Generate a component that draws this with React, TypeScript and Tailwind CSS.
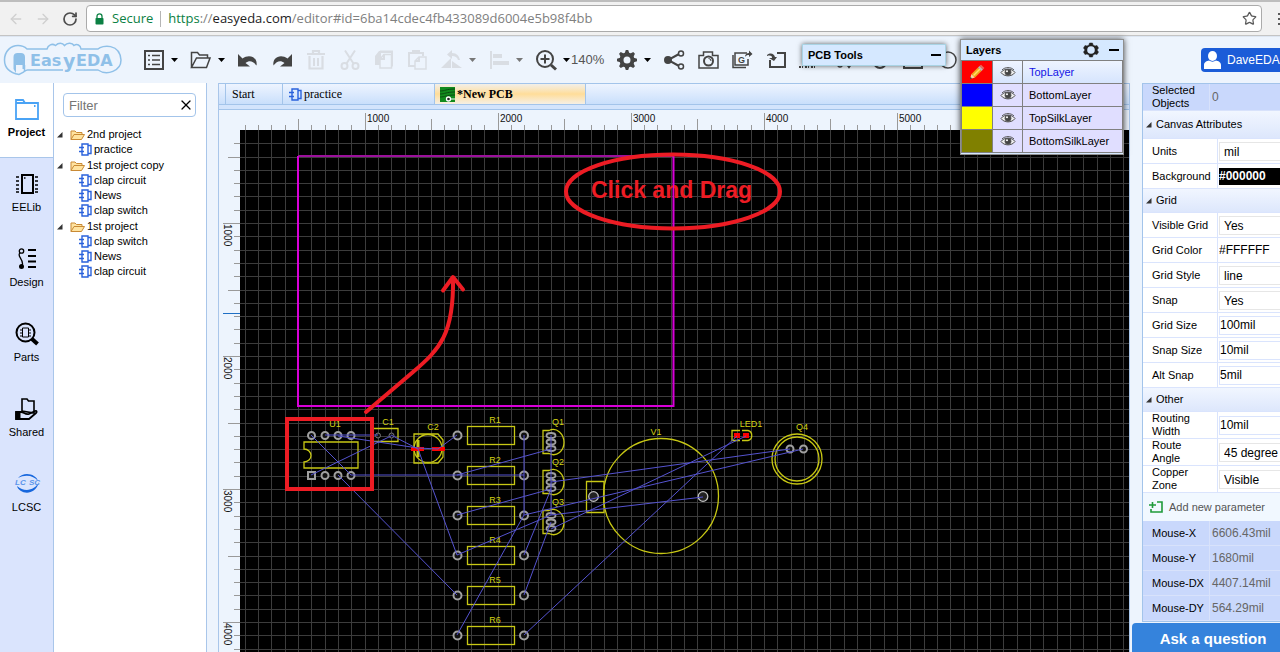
import { useState } from "react";
import type { ReactNode } from "react";
import { Star, RotateCw, ArrowLeft, ArrowRight, X } from "lucide-react";

const mils = [1000, 2000, 3000, 4000, 5000];
const resistors = ["R1", "R2", "R3", "R4", "R5", "R6"];
const transistors = ["Q1", "Q2", "Q3"];

const layers = [
  { name: "TopLayer", swatch: "bg-[#ff0000]" },
  { name: "BottomLayer", swatch: "bg-[#0000ff]" },
  { name: "TopSilkLayer", swatch: "bg-[#ffff00]" },
  { name: "BottomSilkLayer", swatch: "bg-[#808000]" },
];

const projects = [
  { name: "2nd project", files: ["practice"] },
  { name: "1st project copy", files: ["clap circuit", "News", "clap switch"] },
  { name: "1st project", files: ["clap switch", "News", "clap circuit"] },
];

// Unrouted nets, pad to pad
const ratsnest = [
  [311, 435, 351, 475],
  [325, 435, 378, 435],
  [338, 436, 418, 448],
  [418, 448, 438, 449],
  [311, 475, 391, 436],
  [391, 435, 418, 449],
  [351, 475, 524, 475],
  [338, 475, 457, 595],
  [418, 449, 457, 555],
  [438, 449, 457, 435],
  [524, 435, 524, 515],
  [457, 475, 551, 449],
  [457, 515, 551, 489],
  [457, 555, 551, 515],
  [524, 515, 457, 635],
  [524, 555, 551, 489],
  [524, 595, 551, 522],
  [551, 435, 551, 515],
  [551, 482, 790, 449],
  [524, 515, 803, 449],
  [551, 515, 703, 497],
  [551, 529, 746, 436],
  [524, 635, 737, 436],
];

function Caret({ className = "" }: { className?: string }) {
  return (
    <svg width="9" height="5" viewBox="0 0 9 5" className={className}>
      <path d="M1 0h7L4.500 4z" fill="currentColor" />
    </svg>
  );
}

function Twisty() {
  return (
    <svg width="6" height="6" viewBox="0 0 6 6" className="shrink-0">
      <path d="M5.500 0v5.500H0z" fill="#333" />
    </svg>
  );
}

function Tool({
  label,
  menu = false,
  disabled = false,
  children,
}: {
  label: string;
  menu?: boolean;
  disabled?: boolean;
  children: ReactNode;
}) {
  return (
    <button
      aria-label={label}
      disabled={disabled}
      className={`flex h-6 shrink-0 items-center gap-1 ${disabled ? "text-[#d9dde3]" : "text-[#444]"}`}
    >
      <svg width="24" height="24" viewBox="0 0 24 24" fill="none" stroke="currentColor" strokeWidth="2">
        {children}
      </svg>
      {menu && <Caret className={disabled ? "text-[#777]" : "text-black"} />}
    </button>
  );
}

function Gear({ size = 20, teeth = 8 }: { size?: number; teeth?: number }) {
  return (
    <svg width={size} height={size} viewBox="-10 -10 20 20" x="2" y="2">
      {Array.from({ length: teeth }, (_, i) => (
        <path key={i} d="M-2.600-6L-1.200-10H1.200L2.600-6z" fill="currentColor" stroke="none" transform={`rotate(${(i * 360) / teeth})`} />
      ))}
      <circle r="5.500" fill="none" stroke="currentColor" strokeWidth="4" />
    </svg>
  );
}

function AddressBar() {
  return (
    <header className="flex h-9 shrink-0 items-center gap-2 border-b border-t-2 border-b-[#c4c4c4] border-t-[#bdbdbd] bg-[#f1f1f1] pl-2">
      <div className="flex w-[70px] items-center gap-[11px]">
        <button aria-label="Back" className="text-[#cfcfcf]">
          <ArrowLeft className="h-4 w-4" />
        </button>
        <button aria-label="Forward" className="text-[#cfcfcf]">
          <ArrowRight className="h-4 w-4" />
        </button>
        <button aria-label="Reload" className="text-[#4d4d4d]">
          <RotateCw className="h-4 w-4" strokeWidth={2.6} />
        </button>
      </div>
      <div className="flex h-[27px] min-w-0 flex-1 items-center rounded-sm border border-[#ababab] bg-white pl-2 pr-1 font-['Open_Sans','Noto_Sans',sans-serif] text-[13px]">
        <svg width="9" height="12" viewBox="0 0 9 12" fill="none">
          <path d="M2 5.500V3.300a2.500 2.500 0 0 1 5 0v2.200" stroke="#0b8043" strokeWidth="1.300" />
          <rect x="0.500" y="5" width="8" height="6.500" rx="0.800" fill="#0b8043" />
        </svg>
        <span className="ml-2 text-[#0b8043]">Secure</span>
        <span className="mx-[7px] h-4 w-px bg-[#b5b5b5]" />
        <span className="min-w-0 flex-1 truncate text-[#808080]">
          <span className="text-[#0b8043]">https</span>://<span className="text-[#222]">easyeda.com</span>
          /editor#id=6ba14cdec4fb433089d6004e5b98f4bb
        </span>
        <button aria-label="Bookmark" className="text-[#5a5a5a]">
          <Star className="h-[15px] w-[15px]" />
        </button>
      </div>
      <button aria-label="Browser menu" className="flex w-[10px] shrink-0 flex-col items-end gap-[3px]">
        <i className="h-[2px] w-[2px] bg-[#5a5a5a]" />
        <i className="h-[2px] w-[2px] bg-[#5a5a5a]" />
        <i className="h-[2px] w-[2px] bg-[#5a5a5a]" />
      </button>
    </header>
  );
}

function Logo() {
  return (
    <svg width="120" height="36" viewBox="3 44 120 36" fill="none" stroke="#8fc0e8" strokeWidth="1.500" role="img" aria-label="EasyEDA">
      <path d="M63 72H27.500c-2 0-3 1-4.500 2.500l-4 2c-8-1.500-14.500-6-14.500-14.500C4.500 53 11 47.500 18 47.500c4 0 7 1.500 9 3.500h20c1-4 5-6 8.500-3.500 3-3 7-3 9 0 3-3.500 8-2.500 9.500 0 3-2 6.500-.5 7 3.500h17c4-4 22-6 23 11 0 11-14 16-23 10H76" />
      <path d="M13.500 71V59c0-2.500 1.500-4 4-4h3.500c2.500 0 4 1.500 4 4v12l-2.500 0v-4h-6.500v8z" fill="#8fc0e8" stroke="none" />
      <path d="M24.500 67v7" />
      <g fill="#8fc0e8" stroke="none" fontFamily="'DejaVu Sans', sans-serif" fontWeight="700" fontSize="16">
        <text x="30" y="68">
          Eas
        </text>
        <text x="63" y="70" fontSize="19">
          y
        </text>
        <text x="76" y="68">
          EDA
        </text>
      </g>
    </svg>
  );
}

function Toolbar() {
  return (
    <div className="flex h-[47px] shrink-0 items-center overflow-hidden border-t border-[#dde6f2] bg-[#edf4fd]">
      <div className="w-[142px] shrink-0 pl-[3px]">
        <Logo />
      </div>
      <div className="flex min-w-0 flex-1 items-center gap-[10px] overflow-hidden">
        <Tool label="Document" menu>
          <path d="M3 3h18v18H3z" />
          <path d="M6 7.500h2M10 7.500h8M6 12h2M10 12h8M6 16.500h2M10 16.500h8" strokeWidth="1.500" />
        </Tool>
        <Tool label="Open" menu>
          <path d="M2.500 19.500v-15h6l2 2.500h8v3M2.500 19.500h15l3.500-9.500H7.500z" strokeWidth="1.500" />
        </Tool>
        <Tool label="Undo">
          <path d="M2 6v12.500h12l-4.500-3.500c4-3 7.500-2 11 2.500C22 9 13 5.500 6.500 10.500z" fill="currentColor" stroke="none" />
        </Tool>
        <Tool label="Redo">
          <path d="M22 6v12.500H10l4.500-3.500c-4-3-7.500-2-11 2.500C2 9 11 5.500 17.500 10.500z" fill="currentColor" stroke="none" />
        </Tool>
        <Tool label="Delete" disabled>
          <path d="M3 6h18M9 5V3h6v2M5.500 8v12.500h13V8" strokeWidth="2.200" />
          <path d="M10 10v8M14 10v8" />
        </Tool>
        <Tool label="Cut" disabled>
          <path d="M7 2.500l8.500 13M17 2.500L8.500 15.500" />
          <circle cx="6.500" cy="18" r="3" />
          <circle cx="17.500" cy="18" r="3" />
        </Tool>
        <Tool label="Copy" disabled>
          <path d="M8 2.500h13v16h-2V5H7zM3 8l4-5h2v14H3z" fill="currentColor" stroke="none" />
          <path d="M12 6.500h7.500v13.500H8V11z" strokeWidth="1.500" fill="#edf4fd" />
          <path d="M12 6v5H7.500" />
        </Tool>
        <Tool label="Paste" disabled>
          <path d="M9 18H3V5h14v3M7 5V3h6v2" />
          <path d="M13 9h7v12H9v-8z" strokeWidth="1.500" />
          <path d="M13 9v4H9" />
        </Tool>
        <Tool label="Rotate" disabled menu>
          <path d="M1 20l10-10v10zM12 13l10 7H12zM12 2v3c5 0 7 3 8 7h-2c-1-3-3-4-6-4v3L7 6.500z" fill="currentColor" stroke="none" />
        </Tool>
        <Tool label="Align" disabled menu>
          <path d="M4 3v18" />
          <path d="M6 6h9v4H6zM6 13h16v4H6z" fill="currentColor" stroke="none" />
        </Tool>
        <div className="flex items-center">
          <Tool label="Zoom" menu>
            <circle cx="11" cy="11" r="8" />
            <path d="M11 6.500v9M6.500 11h9" />
            <path d="M17 17l5 4.500" strokeWidth="3" />
          </Tool>
          <span className="w-[34px] shrink-0 text-[13px] text-[#555]">140%</span>
        </div>
        <Tool label="Settings" menu>
          <Gear />
        </Tool>
        <Tool label="Share">
          <path d="M18 5.500L6 12l12 6.500" />
          <circle cx="6" cy="12" r="3" fill="currentColor" />
          <circle cx="19" cy="5.500" r="2.500" fill="#edf4fd" strokeWidth="1.500" />
          <circle cx="19" cy="18.500" r="2.500" fill="#edf4fd" strokeWidth="1.500" />
        </Tool>
        <Tool label="Export image">
          <path d="M3 7.500h4.500V4h9v3.500H22V20H3z" strokeWidth="1.500" />
          <circle cx="12.500" cy="13" r="4.500" />
          <path d="M12.500 10.500a2.500 2.500 0 0 1 2.500 2.500" strokeWidth="1" />
        </Tool>
        <Tool label="Gerber">
          <path d="M17 5H5v12h13v-6M3 7v12.500h13" strokeWidth="1.500" />
          <text x="8" y="14.500" fill="currentColor" stroke="none" fontSize="9" fontWeight="700">
            G
          </text>
          <path d="M15 9c0-3 2-4 4-4V2.500L22.500 6 19 9V7c-2 0-3 .5-4 2z" fill="currentColor" stroke="none" />
        </Tool>
        <Tool label="Import changes">
          <path d="M13 5h8v14H6v-7" />
          <path d="M3 7c4-3 7-1 8 2h2l-3 4-5-3h3C8 7.500 6 7 3 8z" fill="currentColor" stroke="none" />
        </Tool>
        <Tool label="Run">
          <path d="M1 19h4M7 19h4M13 19h4" strokeDasharray="2 1" />
        </Tool>
        <Tool label="History">
          <circle cx="8" cy="17" r="2" strokeWidth="1.500" />
          <path d="M14 15l3 4 3-4" />
        </Tool>
        <Tool label="Refresh">
          <circle cx="14" cy="14" r="6" />
        </Tool>
        <Tool label="Save">
          <path d="M4 6v14h18V6" />
        </Tool>
        <Tool label="Help">
          <circle cx="14" cy="12" r="8" strokeWidth="1.500" />
        </Tool>
      </div>
      <button className="flex h-6 w-[79px] shrink-0 items-center gap-[6px] overflow-hidden rounded-l bg-[#1b5cd8] pl-[3px] text-[12px] text-white">
        <svg width="17" height="18" viewBox="0 0 17 18" fill="currentColor" className="shrink-0">
          <ellipse cx="8.500" cy="5" rx="4.500" ry="5" />
          <path d="M0 18v-4c0-3 3-4 5-4.500 2 1.500 5 1.500 7 0 2 .5 5 1.500 5 4.500v4z" />
        </svg>
        DaveEDA
      </button>
    </div>
  );
}

const navItems: { name: string; icon: ReactNode }[] = [
  {
    name: "Project",
    icon: <path d="M3 24V5h7l2 3h13v16zM3 8h9M21 11h1.500" stroke="#4aa3f5" strokeWidth="1.800" />,
  },
  {
    name: "EELib",
    icon: (
      <>
        <path d="M9 5h11v18H9z" strokeWidth="2" />
        <path d="M3 7h3M3 11h3M3 15h3M3 19h3M22 7h3M22 11h3M22 15h3M22 19h3M3 22h3M22 22h3" strokeWidth="1.500" />
        <path d="M11 8h1.500" strokeWidth="1.500" />
      </>
    ),
  },
  {
    name: "Design",
    icon: (
      <>
        <circle cx="8.500" cy="6" r="2.200" strokeWidth="1.300" />
        <path d="M7 8c-4 3 5 7 2 13" strokeWidth="1.300" />
        <circle cx="8.500" cy="21.500" r="2.500" fill="currentColor" stroke="none" />
        <path d="M15 5h8M15 11h8M15 16.500h8M15 22h8" strokeWidth="2.200" />
      </>
    ),
  },
  {
    name: "Parts",
    icon: (
      <>
        <circle cx="12.500" cy="12.500" r="9" strokeWidth="2" />
        <path d="M9.500 8h6v9h-6zM7 10h2M7 13h2M7 16h2M16 10h2M16 13h2M16 16h2" strokeWidth="1" />
        <path d="M19 19l5.500 5" strokeWidth="4" />
      </>
    ),
  },
  {
    name: "Shared",
    icon: (
      <>
        <path d="M9 16V4h5l1.500 2H21v12z" strokeWidth="1.600" />
        <path d="M3 17h5c3 0 4 3 8 2l6-3c2-.5 2 1 1 2l-7 6H3z" strokeWidth="1.800" />
        <path d="M3 17h4v7H3z" fill="currentColor" />
      </>
    ),
  },
  {
    name: "LCSC",
    icon: (
      <>
        <path d="M5 8c6-7 18-4 20 3-4-5-12-7-20-3zM4 16c2 8 18 11 22-4-4 8-14 11-22 4z" fill="#1767dd" stroke="none" />
        <text x="2" y="15" fontSize="8" fontStyle="italic" fontWeight="700" fill="#5b94ea" stroke="none">
          LC
        </text>
        <text x="16" y="15" fontSize="8" fontStyle="italic" fontWeight="700" fill="#5b94ea" stroke="none">
          SC
        </text>
      </>
    ),
  },
];

function SideNav() {
  const [active, setActive] = useState("Project");
  return (
    <nav className="w-[54px] shrink-0 border-r border-[#a9c6ea] bg-[#dae4fd]">
      {navItems.map((item) => (
        <button
          key={item.name}
          onClick={() => setActive(item.name)}
          className={`flex h-[75px] w-full flex-col items-center gap-px pt-3 text-[11px] text-black ${
            active === item.name ? "border-b border-[#a9c6ea] bg-white font-bold" : ""
          }`}
        >
          <svg width="28" height="28" viewBox="0 0 28 28" fill="none" stroke="currentColor">
            {item.icon}
          </svg>
          {item.name}
        </button>
      ))}
    </nav>
  );
}

function SchematicIcon() {
  return (
    <svg width="13" height="13" viewBox="0 0 13 13" fill="none" stroke="#2a62dc" strokeWidth="1.400" className="shrink-0">
      <path d="M3 4V1h6v1M3 9v3h6v-1M9 2.500h3v8H9zM0 4.500h5M0 8.500h5M3 4.500v4" />
    </svg>
  );
}

function ProjectTree() {
  return (
    <aside className="w-[153px] shrink-0 border-r border-[#a9c6ea] bg-white pl-[3px] pt-[10px] text-[11px] text-black">
      <div className="relative ml-[6px] w-[133px]">
        <input
          aria-label="Filter"
          placeholder="Filter"
          className="h-6 w-full rounded-sm border border-[#a3c4ea] pl-[5px] text-[13px] outline-none placeholder:text-[#757575]"
        />
        <button aria-label="Clear filter" className="absolute right-[2px] top-1">
          <X className="h-4 w-4" strokeWidth={1.8} />
        </button>
      </div>
      <ul className="mt-[10px] flex flex-col gap-px">
        {projects.map((p) => (
          <li key={p.name}>
            <div className="flex h-[15px] items-center whitespace-nowrap">
              <Twisty />
              <svg width="15" height="12" viewBox="0 0 15 12" className="ml-[7px] mr-[2px] shrink-0" fill="#ffe3a0" stroke="#c98a35">
                <path d="M1 10.500V2h4l1.500 1.500H12v2" />
                <path d="M1 10.500l3-5h10.500l-3 5z" />
              </svg>
              {p.name}
            </div>
            <ul>
              {p.files.map((f) => (
                <li key={f} className="flex h-[15px] items-center gap-[2px] pl-[22px]">
                  <SchematicIcon />
                  {f}
                </li>
              ))}
            </ul>
          </li>
        ))}
      </ul>
    </aside>
  );
}

function Pad({ x, y, r = 4 }: { x: number; y: number; r?: number }) {
  return <circle cx={x} cy={y} r={r} fill="#111" stroke="#a0a0a0" strokeWidth="2" />;
}

function PcbCanvas() {
  const cols = Array.from({ length: 110 }, (_, i) => i - 9);
  const rows = Array.from({ length: 90 }, (_, i) => i - 6);
  return (
    <svg className="block h-full w-full" fontFamily="'Liberation Sans', Arial, sans-serif">
      {/* origin sits at the corner of the ruler strip */}
      <g transform="translate(-219 -110)">
        <rect x="240" y="130" width="100%" height="100%" fill="#000" />
        <g shapeRendering="crispEdges">
          {cols.map((i) => {
            const x = Math.round(364.6 + i * 13.31);
            const top = i % 10 === 0 ? 113 : i % 5 === 0 ? 119 : 125;
            return (
              <g key={i}>
                <path d={`M${x}.5 ${top}V130`} stroke="#999" />
                <path d={`M${x}.5 130V1400`} stroke="#3c3c3c" />
              </g>
            );
          })}
          {rows.map((i) => {
            const y = Math.round(223 + i * 13.3);
            const left = i % 10 === 0 ? 223 : i % 5 === 0 ? 228 : 234;
            return (
              <g key={i}>
                <path d={`M${left} ${y}.5H240`} stroke="#999" />
                <path d={`M240 ${y}.5H2400`} stroke="#3c3c3c" />
              </g>
            );
          })}
          <path d="M223 313.500H240" stroke="#1f6fc4" />
        </g>
        <g fontSize="10" fill="#111">
          {mils.map((m, i) => (
            <text key={m} x={367 + i * 133} y="122">
              {m}
            </text>
          ))}
          {mils.slice(0, 4).map((m, i) => (
            <text key={m} transform={`translate(224 ${224 + i * 133}) rotate(90)`}>
              {m}
            </text>
          ))}
        </g>

        <path d="M298 156H673" stroke="#9c109c" strokeWidth="2" />
        <path d="M298 156V406H673.500V156" fill="none" stroke="#d800d8" strokeWidth="2" />

        {/* silkscreen */}
        <g fill="none" stroke="#c8c814" strokeWidth="1.300">
          <path d="M304 449v-7h54v26h-54v-6c4 0 7-3 7-6.500s-3-6.500-7-6.500z" />
          <path d="M372 428.500h26v13h-26" />
          <path d="M414 434h24l5 6v17l-5 6h-24z" />
          <circle cx="428" cy="448.500" r="14" />
          <path d="M418 440v17" strokeWidth="3" />
          {resistors.map((r, i) => (
            <rect key={r} x="467.500" y={426.5 + i * 40} width="47" height="18" />
          ))}
          {transistors.map((q, i) => (
            <path key={q} d="M543 430.500h6c8-4 15 4 15 12s-7 15-15 11h-6z" transform={`translate(0 ${i * 40})`} />
          ))}
          <circle cx="661" cy="496" r="57.500" />
          <path d="M604 481.500h-17.500v31h17.500z" />
          <path d="M740 430.500h-8v10h8M742 430.500h6c5 1 5 9 0 10h-6" />
          <circle cx="797" cy="459" r="25" />
          <circle cx="797" cy="459" r="22" />
        </g>
        <g fill="#d2d214" fontSize="9" textAnchor="middle">
          <text x="335" y="427">U1</text>
          <text x="388" y="425">C1</text>
          <text x="433" y="430">C2</text>
          {resistors.map((r, i) => (
            <text key={r} x="495" y={423 + i * 40}>
              {r}
            </text>
          ))}
          {transistors.map((q, i) => (
            <text key={q} x="558" y={425 + i * 40}>
              {q}
            </text>
          ))}
          <text x="656" y="435">V1</text>
          <text x="751" y="427">LED1</text>
          <text x="802" y="430">Q4</text>
        </g>

        {/* pads */}
        {[325, 338, 351].map((x) => (
          <g key={x}>
            <Pad x={x} y={435.5} r={3.5} />
            <Pad x={x} y={475.5} r={3.5} />
          </g>
        ))}
        <Pad x={311.5} y={435.5} r={3.5} />
        <rect x="308" y="472" width="7" height="7" fill="#111" stroke="#a0a0a0" strokeWidth="2" />
        <circle cx="378" cy="435.500" r="2.500" fill="#111" stroke="#777" />
        <circle cx="391.500" cy="435.500" r="2.500" fill="#111" stroke="#777" />
        {resistors.map((r, i) => (
          <g key={r}>
            <Pad x={457.5} y={435.5 + i * 40} />
            <Pad x={524} y={435.5 + i * 40} />
          </g>
        ))}
        {transistors.map((q, i) => (
          <g key={q} fill="#111" stroke="#a0a0a0" strokeWidth="1.800">
            <ellipse cx="551" cy={435.5 + i * 40} rx="4.500" ry="2.500" />
            <ellipse cx="551" cy={442 + i * 40} rx="4.500" ry="2.500" />
            <ellipse cx="551" cy={448.5 + i * 40} rx="4.500" ry="2.500" />
          </g>
        ))}
        <circle cx="593.500" cy="496.500" r="4.800" fill="#222" stroke="#c0c0c0" strokeWidth="1.300" />
        <circle cx="703" cy="496.500" r="4.800" fill="#222" stroke="#c0c0c0" strokeWidth="1.300" />
        <Pad x={790} y={449} r={3.5} />
        <Pad x={803.5} y={449} r={3.5} />
        <path d="M411 447h13v4h-13zM432 447h13v4h-13zM734 433h6v5h-6zM743 433h6v5h-6z" fill="#f00" />

        <g stroke="#5553d0" strokeWidth="1">
          {ratsnest.map(([x1, y1, x2, y2], i) => (
            <line key={i} x1={x1} y1={y1} x2={x2} y2={y2} />
          ))}
        </g>

        {/* annotations */}
        <g fill="none" stroke="#ed1c24" strokeWidth="4">
          <rect x="287" y="419" width="85" height="70" />
          <ellipse cx="673" cy="191.500" rx="107" ry="37" />
          <path d="M366 412L413 372C440 349 454 334 453 278" strokeLinecap="round" />
          <path d="M443 290.500L453 277l10 12.500" strokeLinecap="round" strokeLinejoin="round" />
        </g>
        <text x="591" y="198" fill="#ed1c24" fontSize="23" fontWeight="700">
          Click and Drag
        </text>
        <path d="M673.500 158V226" stroke="#d800d8" strokeWidth="1" />
      </g>
    </svg>
  );
}

function Editor() {
  return (
    <main className="flex min-w-0 flex-1 flex-col border-x border-[#a9c6ea] bg-[#edf4fd]">
      <div role="tablist" className="flex h-[22px] shrink-0 border-y border-[#a3c4ea] bg-linear-to-b from-[#eef4ff] to-[#c9dffb] pl-[6px] font-['Liberation_Serif',serif] text-[12px] text-black">
        <button role="tab" className="w-[57px] border-l border-[#a3c4ea] pl-[6px] text-left">
          Start
        </button>
        <button role="tab" className="flex w-[152px] items-center gap-[2px] border-l border-[#a3c4ea] pl-[6px]">
          <SchematicIcon />
          practice
        </button>
        <button
          role="tab"
          aria-selected
          className="flex w-[152px] items-center gap-[2px] border-x border-[#a3c4ea] bg-linear-to-b from-[#f2efe9] via-[#ffdd99] to-[#f5efe4] pl-[5px] font-bold"
        >
          <svg width="15" height="15" viewBox="0 0 15 15">
            <path d="M0 0h15v15H0z" fill="#128a1d" />
            <path d="M0 4c5 0 6-2 15-2M0 7c5 0 6-2 15-2M0 10c5 0 6-2 15-2" stroke="#0a4d10" fill="none" />
            <circle cx="8.500" cy="12" r="2" fill="#222" stroke="#fff" strokeWidth="1.300" />
            <path d="M11 12h4" stroke="#fff" />
          </svg>
          *New PCB
        </button>
      </div>
      <div className="h-[5px] shrink-0 border-b border-[#a3c4ea] bg-[#d3e4fc]" />
      <div className="min-h-0 flex-1">
        <PcbCanvas />
      </div>
    </main>
  );
}

function Row({ label, children, tall = false }: { label: string; children: ReactNode; tall?: boolean }) {
  return (
    <label className={`flex border-b border-[#dae4fd] bg-white ${tall ? "h-[27px]" : "h-[25px]"}`}>
      <span className="flex w-[75px] shrink-0 items-center border-r border-[#dae4fd] pl-[9px] pr-2 leading-[13px]">{label}</span>
      <span className="flex min-w-0 flex-1 items-center overflow-hidden pl-px text-[12px]">{children}</span>
    </label>
  );
}

function Text({ value }: { value: string }) {
  return <input defaultValue={value} className="h-[19px] w-full border border-r-0 border-[#dae4fd] outline-none" />;
}

function Choice({ value }: { value: string }) {
  return (
    <select defaultValue={value} className="h-[19px] w-full appearance-none border border-r-0 border-[#e6e6e6] bg-white pl-1 outline-none">
      <option>{value}</option>
    </select>
  );
}

function Group({ title, tall = false }: { title: string; tall?: boolean }) {
  return (
    <h3
      className={`flex items-center gap-1 border-b border-[#dae4fd] bg-linear-to-b from-[#f1f6ff] to-[#dde7fc] pl-[3px] ${
        tall ? "h-[28px]" : "h-[24px]"
      }`}
    >
      <Twisty />
      {title}
    </h3>
  );
}

function MouseRow({ label, value }: { label: string; value: string }) {
  return (
    <div className="flex h-[25px] items-center border-b border-[#d8e2fb] bg-[#c9d8fc]">
      <span className="flex h-full w-[67px] shrink-0 items-center border-r border-[#d8e2fb] pl-[9px]">{label}</span>
      <span className="pl-[2px] text-[12px] text-[#666]">{value}</span>
    </div>
  );
}

function Properties() {
  return (
    <aside className="ml-3 w-[138px] shrink-0 self-start overflow-hidden border-b border-l border-t border-[#a3c4ea] text-[11px] text-black">
      <div className="flex h-[27px] items-center border-b border-[#d8e2fb] bg-[#c9d8fc]">
        <span className="flex h-full w-[67px] shrink-0 items-center border-r border-[#d8e2fb] pl-[9px] leading-[13px]">Selected Objects</span>
        <span className="pl-[2px] text-[12px] text-[#666]">0</span>
      </div>
      <Group title="Canvas Attributes" tall />
      <Row label="Units">
        <Choice value="mil" />
      </Row>
      <Row label="Background">
        <input defaultValue="#000000" className="h-[17px] w-full bg-black font-bold text-white outline-none" />
      </Row>
      <Group title="Grid" />
      <Row label="Visible Grid">
        <Choice value="Yes" />
      </Row>
      <Row label="Grid Color">
        <input defaultValue="#FFFFFF" className="h-[19px] w-full outline-none" />
      </Row>
      <Row label="Grid Style">
        <Choice value="line" />
      </Row>
      <Row label="Snap">
        <Choice value="Yes" />
      </Row>
      <Row label="Grid Size">
        <Text value="100mil" />
      </Row>
      <Row label="Snap Size">
        <Text value="10mil" />
      </Row>
      <Row label="Alt Snap">
        <Text value="5mil" />
      </Row>
      <Group title="Other" />
      <Row label="Routing Width" tall>
        <Text value="10mil" />
      </Row>
      <Row label="Route Angle" tall>
        <Choice value="45 degree" />
      </Row>
      <Row label="Copper Zone" tall>
        <Choice value="Visible" />
      </Row>
      <button className="flex h-[28px] w-full items-center gap-[6px] whitespace-nowrap bg-[#f1f8ff] pl-[6px] text-[#555]">
        <svg width="14" height="12" viewBox="0 0 14 12" fill="none" stroke="#1f9a3a" strokeWidth="1.600">
          <path d="M8 1h5v10H2V8M0 4h7M3.500 1v6" />
        </svg>
        Add new parameter
      </button>
      <MouseRow label="Mouse-X" value="6606.43mil" />
      <MouseRow label="Mouse-Y" value="1680mil" />
      <MouseRow label="Mouse-DX" value="4407.14mil" />
      <MouseRow label="Mouse-DY" value="564.29mil" />
    </aside>
  );
}

function LayersPanel() {
  return (
    <section className="absolute right-[156px] top-[39px] w-[164px] border border-[#8f8f8f] bg-[#d5e8ff] pb-px text-[11px] text-black shadow-[0_0_6px_rgba(0,0,0,0.7)]">
      <div className="flex h-5 items-center pl-[5px] pr-1 font-bold">
        <span className="flex-1">Layers</span>
        <button aria-label="Layer settings" className="mr-[10px] text-[#222]">
          <svg width="16" height="16" viewBox="0 0 16 16" fill="none" stroke="currentColor">
            <path d="M6.500 1h3l.5 2 2 1 2-.5L15.500 6 14 8l1.500 2-1.500 2.500-2-.5-2 1-.5 2h-3L6 13l-2-1-2 .5L.5 10 2 8 .5 6 2 3.500 4 4l2-1z" fill="currentColor" strokeWidth="0.500" />
            <circle cx="8" cy="8" r="3.800" fill="#d5e8ff" stroke="none" />
          </svg>
        </button>
        <button aria-label="Minimize layers" className="h-[2px] w-[10px] bg-black" />
      </div>
      <table className="w-full border-collapse">
        <tbody>
          {layers.map((l, i) => (
            <tr key={l.name} className={i === 0 ? "h-[23px] bg-linear-to-b from-[#eef4ff] to-[#d5e4fd]" : "h-[23px] bg-[#e0deff]"}>
              <td className={`w-[31px] border border-[#808080] ${l.swatch}`}>
                {i === 0 && (
                  <svg width="16" height="16" viewBox="0 0 16 16" className="mx-auto">
                    <path d="M1 15l1.500-5L6 13.500z" fill="#f3d6a5" />
                    <path d="M2.500 10L9 3.500 12.500 7 6 13.500z" fill="#f0a81e" />
                    <path d="M4.500 11.500L11 5" stroke="#ffdf6b" strokeWidth="1.500" />
                    <path d="M9 3.500L10.500 2 14 5.500 12.500 7z" fill="#bbb" />
                    <path d="M10.500 2L12 .800 15.300 4 14 5.500z" fill="#e2705f" />
                    <path d="M1 15l.6-2 1.400 1.400z" fill="#222" />
                  </svg>
                )}
              </td>
              <td className="w-[30px] border border-[#808080]">
                <svg width="16" height="12" viewBox="0 0 16 12" fill="none" stroke="#555" className="mx-auto">
                  <path d="M1 6.500C4 2 12 2 15 6.500 12 11 4 11 1 6.500z" fill="#eee" />
                  <path d="M2 4C5 .800 11 .800 14 4" />
                  <circle cx="8" cy="6.300" r="3" fill="#444" />
                  <circle cx="7" cy="5.300" r="1" fill="#fff" stroke="none" />
                </svg>
              </td>
              <td className={`border border-[#808080] pl-[6px] ${i === 0 ? "text-[#1414e6]" : ""}`}>{l.name}</td>
            </tr>
          ))}
        </tbody>
      </table>
    </section>
  );
}

export default function App() {
  return (
    <div className="relative flex h-screen flex-col overflow-hidden bg-[#edf4fd] font-['Liberation_Sans',Arial,sans-serif]">
      <AddressBar />
      <Toolbar />
      <div className="flex min-h-0 flex-1">
        <SideNav />
        <ProjectTree />
        <div className="flex min-w-0 flex-1 pl-[11px]">
          <Editor />
        </div>
        <Properties />
      </div>

      <section className="absolute right-[334px] top-[44px] flex h-[22px] w-[144px] items-center border border-[#a9d3e4] bg-[#d5e8ff] pl-[5px] pr-1 text-[11px] font-bold text-black shadow-[0_0_5px_rgba(0,0,0,0.6)]">
        <span className="flex-1">PCB Tools</span>
        <button aria-label="Minimize PCB tools" className="h-[2px] w-[10px] bg-black" />
      </section>
      <LayersPanel />
      <button className="absolute bottom-0 right-0 h-[29px] w-[148px] rounded-tl bg-[#3583dc] pl-[14px] pt-1 text-[15px] font-bold text-white">
        Ask a question
      </button>
    </div>
  );
}
